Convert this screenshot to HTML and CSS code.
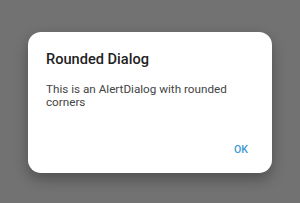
FILE: index.html
```html
<!DOCTYPE html>
<html>
<head>
<meta charset="utf-8">
<link rel="stylesheet" href="styles.css">
</head>
<body>
<div class="screen">
  <div class="dialog">
    <div class="title">Rounded Dialog</div>
    <div class="content">This is an AlertDialog with rounded corners</div>
    <div class="actions"><span class="btn">OK</span></div>
  </div>
</div>
</body>
</html>
```
FILE: styles.css
```css
html, body { margin: 0; padding: 0; }
body { width: 300px; height: 203px; background: #727272; font-family: Roboto, "Noto Sans", sans-serif; overflow: hidden; }
.screen { height: 203px; display: flex; align-items: flex-start; justify-content: center; padding-top: 32px; box-sizing: border-box; }
.dialog { width: 244px; height: 141px; background: #fff; border-radius: 13px; box-sizing: border-box; padding: 18px 18px 0 18px; display: flex; flex-direction: column; box-shadow: 0 6px 14px rgba(0,0,0,0.3); }
.title { font-size: 14.6px; font-weight: 500; color: #222; line-height: 18px; }
.content { margin-top: 15px; font-size: 11.7px; color: #444; line-height: 13px; padding-right: 20px; }
.actions { margin-top: auto; display: flex; justify-content: flex-end; padding-bottom: 17px; margin-right: 6px; }
.btn { color: #3d9ad6; font-size: 10.6px; font-weight: 500; line-height: 12px; }
```
